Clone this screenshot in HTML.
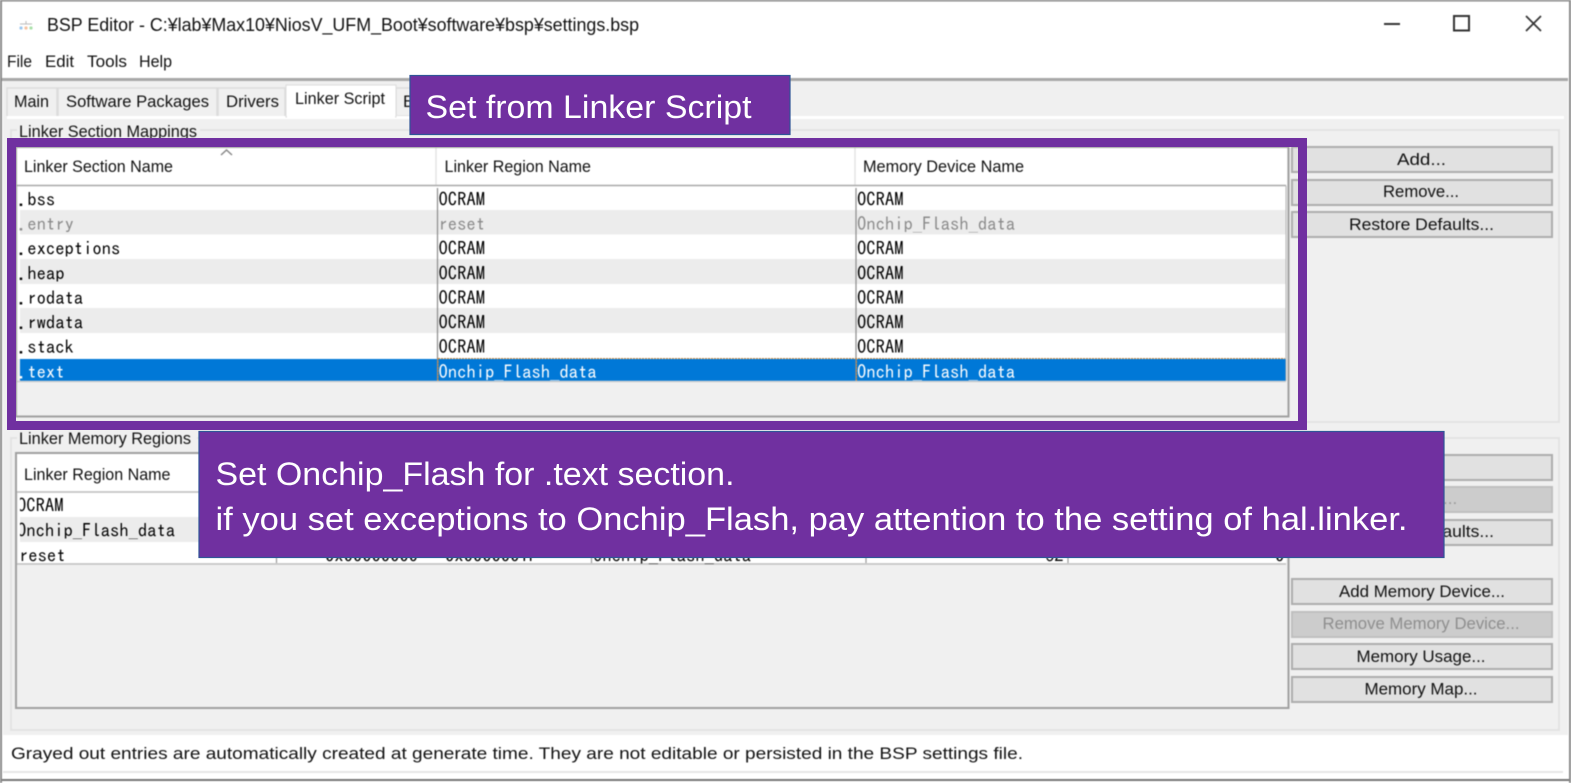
<!DOCTYPE html>
<html lang="en"><head><meta charset="utf-8"><title>BSP Editor</title>
<style>
html,body{margin:0;padding:0;background:#fff;width:1571px;height:783px;overflow:hidden}
svg{display:block}
.ui{font-family:"Liberation Sans",sans-serif;font-size:17px;fill:#111}
.m{font-family:"IPAGothic","Liberation Mono",monospace;font-size:18.6px;fill:#000}
.g{fill:#8a8a8a}
.w{fill:#fff}
.c{font-family:"Liberation Sans",sans-serif;font-size:32px;fill:#fff}
.b{fill:#e1e1e1;stroke:#adadad;stroke-width:2}
.d{fill:#cccccc;stroke:#bfbfbf;stroke-width:2}
.f{fill:none;stroke:#e3e3e3;stroke-width:2}
.blur{filter:blur(.45px)}
</style></head><body>
<svg width="1571" height="783" viewBox="0 0 1571 783" xmlns="http://www.w3.org/2000/svg">
<g class="blur">
<rect width="1571" height="783" fill="#fff"/>
<rect x="3" y="81" width="1565" height="654" fill="#f0f0f0"/>
<!-- title -->
<circle cx="21" cy="28" r="1.6" fill="#9cc8f0"/><circle cx="26" cy="28" r="1.6" fill="#f5c2a0"/><circle cx="31" cy="28" r="1.6" fill="#a8e0a8"/>
<path d="M20 24H32M26 21V24" stroke="#bbb" stroke-width="1" fill="none"/>
<text class="ui" x="47" y="31" textLength="592" lengthAdjust="spacingAndGlyphs" style="font-size:18px">BSP Editor - C:¥lab¥Max10¥NiosV_UFM_Boot¥software¥bsp¥settings.bsp</text>
<path d="M1384 24H1400" stroke="#333" stroke-width="2"/>
<rect x="1454" y="16" width="15" height="14.5" fill="none" stroke="#333" stroke-width="2"/>
<path d="M1526 16L1541 31M1541 16L1526 31" stroke="#333" stroke-width="1.7"/>
<text class="ui" x="7" y="67" textLength="25" lengthAdjust="spacingAndGlyphs">File</text>
<text class="ui" x="45" y="67" textLength="29" lengthAdjust="spacingAndGlyphs">Edit</text>
<text class="ui" x="87" y="67" textLength="40" lengthAdjust="spacingAndGlyphs">Tools</text>
<text class="ui" x="139" y="67" textLength="33" lengthAdjust="spacingAndGlyphs">Help</text>
<rect x="0" y="78" width="1568" height="3" fill="#a8a8a8"/>
<!-- tabs -->
<path d="M7 116V88H57V116M58 116V88H217V116M218 116V88H285V116" fill="#f0f0f0" stroke="#dcdcdc" stroke-width="1.5"/>
<rect x="396" y="88" width="20" height="28" fill="#f0f0f0" stroke="#dcdcdc" stroke-width="1.5"/>
<rect x="7" y="116" width="1557" height="3" fill="#fff"/>
<rect x="286" y="85" width="110" height="32" fill="#fff" stroke="#dcdcdc" stroke-width="1"/>
<rect x="287" y="115" width="108" height="3" fill="#fff"/>
<text class="ui" x="14" y="107" textLength="35" lengthAdjust="spacingAndGlyphs">Main</text>
<text class="ui" x="66" y="107" textLength="143" lengthAdjust="spacingAndGlyphs">Software Packages</text>
<text class="ui" x="226" y="107" textLength="53" lengthAdjust="spacingAndGlyphs">Drivers</text>
<text class="ui" x="295" y="104" textLength="90" lengthAdjust="spacingAndGlyphs">Linker Script</text>
<text class="ui" x="403" y="107">B</text>
<!-- groups -->
<rect x="11" y="130" width="1548" height="292" class="f"/>
<rect x="11" y="438" width="1548" height="292" class="f"/>
<rect x="17" y="120" width="183" height="18" fill="#f0f0f0"/>
<rect x="17" y="430" width="180" height="18" fill="#f0f0f0"/>
<text class="ui" x="19" y="137" textLength="178" lengthAdjust="spacingAndGlyphs">Linker Section Mappings</text>
<text class="ui" x="19" y="444" textLength="172" lengthAdjust="spacingAndGlyphs">Linker Memory Regions</text>
<!-- table 1 -->
<rect x="16" y="147" width="1272.500" height="269.500" fill="#f0f0f0" stroke="#a0a0a0" stroke-width="2"/>
<rect x="17" y="148" width="1270" height="37" fill="#fff"/>
<path d="M436 148V185M855 148V185" stroke="#e5e5e5" stroke-width="1.5"/>
<path d="M221 155L226.500 150L232 155" fill="none" stroke="#888" stroke-width="1.5"/>
<text class="ui" x="24" y="172" textLength="149" lengthAdjust="spacingAndGlyphs">Linker Section Name</text>
<text class="ui" x="444.500" y="172" textLength="146.500" lengthAdjust="spacingAndGlyphs">Linker Region Name</text>
<text class="ui" x="863" y="172" textLength="161" lengthAdjust="spacingAndGlyphs">Memory Device Name</text>
<rect x="18" y="186" width="1268" height="173" fill="#fff"/>
<rect x="20" y="210" width="1266" height="24.500" fill="#ececec"/>
<rect x="20" y="259" width="1266" height="25" fill="#ececec"/>
<rect x="20" y="308" width="1266" height="25" fill="#ececec"/>
<rect x="20" y="359" width="1266" height="22" fill="#0078d7"/>
<path d="M17 185.500H1286" stroke="#a8a8a8" stroke-width="1.500"/>
<path d="M1286 186V381" stroke="#b5b5b5"/>
<path d="M437.500 188V381M856 188V381" stroke="#8c8c8c" stroke-width="1.200"/>
<path d="M438 358.500H1285M438 358V381M856.500 358V381" stroke="#d28a3c" stroke-width="1" stroke-dasharray="2 1" fill="none"/>
<g class="m">
<text x="18" y="206">.bss</text><text x="438.500" y="206">OCRAM</text><text x="857" y="206">OCRAM</text>
<text x="18" y="230.600" class="m g">.entry</text><text x="438.500" y="230.600" class="m g">reset</text><text x="857" y="230.600" class="m g">Onchip_Flash_data</text>
<text x="18" y="255.200">.exceptions</text><text x="438.500" y="255.200">OCRAM</text><text x="857" y="255.200">OCRAM</text>
<text x="18" y="279.800">.heap</text><text x="438.500" y="279.800">OCRAM</text><text x="857" y="279.800">OCRAM</text>
<text x="18" y="304.400">.rodata</text><text x="438.500" y="304.400">OCRAM</text><text x="857" y="304.400">OCRAM</text>
<text x="18" y="329">.rwdata</text><text x="438.500" y="329">OCRAM</text><text x="857" y="329">OCRAM</text>
<text x="18" y="353.600">.stack</text><text x="438.500" y="353.600">OCRAM</text><text x="857" y="353.600">OCRAM</text>
<text x="18" y="378.500" class="m w">.text</text><text x="438.500" y="378.500" class="m w">Onchip_Flash_data</text><text x="857" y="378.500" class="m w">Onchip_Flash_data</text>
</g>
<rect x="18" y="381" width="1268" height="34.500" fill="#f0f0f0"/>
<path d="M17 381.500H1286" stroke="#d0d0d0" stroke-width="1.500"/>
<!-- table 2 -->
<rect x="16" y="453" width="1272.500" height="255" fill="#f0f0f0" stroke="#a0a0a0" stroke-width="2"/>
<rect x="17" y="454" width="1270" height="37" fill="#fff"/>
<text class="ui" x="24" y="480" textLength="146.500" lengthAdjust="spacingAndGlyphs">Linker Region Name</text>
<rect x="18" y="493" width="1268" height="70" fill="#fff"/>
<rect x="20" y="517" width="1266" height="25" fill="#ececec"/>
<path d="M17 492H1286M17 564H1286" stroke="#c0c0c0" stroke-width="1.500"/>
<path d="M276.500 493V563M591.500 493V563M866 493V563M1068 493V563" stroke="#999" stroke-width="1.200"/>
<g class="m">
<svg x="20" y="493" width="240" height="71">
<text x="-3" y="19">OCRAM</text><text x="-3" y="44">Onchip_Flash_data</text><text x="-1" y="69">reset</text>
</svg>
<text x="325" y="562">0x00000000</text><text x="445" y="562">0x0000001F</text><text x="593" y="562">Onchip_Flash_data</text><text x="1045" y="562">62</text><text x="1275" y="562">0</text>
</g>
<rect x="18" y="565" width="1268" height="142" fill="#f0f0f0"/>
<!-- buttons -->
<rect x="1292" y="147" width="260" height="25" class="b"/>
<rect x="1292" y="180" width="260" height="25" class="b"/>
<rect x="1292" y="212" width="260" height="25" class="b"/>
<rect x="1292" y="455" width="260" height="25" class="b"/>
<rect x="1292" y="487" width="260" height="25" class="d"/>
<rect x="1292" y="520" width="260" height="25" class="b"/>
<rect x="1292" y="579" width="260" height="25" class="b"/>
<rect x="1292" y="612" width="260" height="25" class="d"/>
<rect x="1292" y="644" width="260" height="25" class="b"/>
<rect x="1292" y="677" width="260" height="25" class="b"/>
<text class="ui" x="1397" y="165" textLength="49" lengthAdjust="spacingAndGlyphs">Add...</text>
<text class="ui" x="1383" y="197" textLength="76" lengthAdjust="spacingAndGlyphs">Remove...</text>
<text class="ui" x="1349" y="230" textLength="145" lengthAdjust="spacingAndGlyphs">Restore Defaults...</text>
<text class="ui" x="1443" y="504" style="fill:#999">...</text>
<text class="ui" x="1349" y="537" textLength="145" lengthAdjust="spacingAndGlyphs">Restore Defaults...</text>
<text class="ui" x="1339" y="597" textLength="166" lengthAdjust="spacingAndGlyphs">Add Memory Device...</text>
<text class="ui" x="1322.500" y="629" textLength="197" lengthAdjust="spacingAndGlyphs" style="fill:#8e8e8e">Remove Memory Device...</text>
<text class="ui" x="1356.500" y="662" textLength="129" lengthAdjust="spacingAndGlyphs">Memory Usage...</text>
<text class="ui" x="1364.500" y="694.500" textLength="113" lengthAdjust="spacingAndGlyphs">Memory Map...</text>
<!-- status -->
<rect x="3" y="735" width="1560" height="36" fill="#fff"/>
<text class="ui" x="11" y="759" textLength="1012" lengthAdjust="spacingAndGlyphs">Grayed out entries are automatically created at generate time. They are not editable or persisted in the BSP settings file.</text>
<rect x="3" y="771" width="1560" height="2" fill="#e6e6e6"/>
<rect x="0" y="779" width="1571" height="2" fill="#777"/>
<rect x="0" y="0" width="1571" height="1.500" fill="#8a8a8a"/>
<rect x="0" y="0" width="2" height="783" fill="#8a8a8a"/>
<rect x="1569" y="0" width="2" height="783" fill="#8a8a8a"/>
</g>
<!-- overlays -->
<rect x="11.500" y="142.500" width="1291" height="283" fill="none" stroke="#7030a0" stroke-width="9"/>
<rect x="410" y="75.500" width="380" height="59" fill="#7030a0" stroke="#2f5597" stroke-width="1.200"/>
<rect x="199" y="431.500" width="1245" height="126" fill="#7030a0" stroke="#2f5597" stroke-width="1.200"/>
<text class="c" x="425.500" y="118" textLength="326" lengthAdjust="spacingAndGlyphs">Set from Linker Script</text>
<text class="c" x="215.500" y="485" textLength="519" lengthAdjust="spacingAndGlyphs">Set Onchip_Flash for .text section.</text>
<text class="c" x="215.500" y="530" textLength="1192" lengthAdjust="spacingAndGlyphs">if you set exceptions to Onchip_Flash, pay attention to the setting of hal.linker.</text>
</svg>
</body></html>
